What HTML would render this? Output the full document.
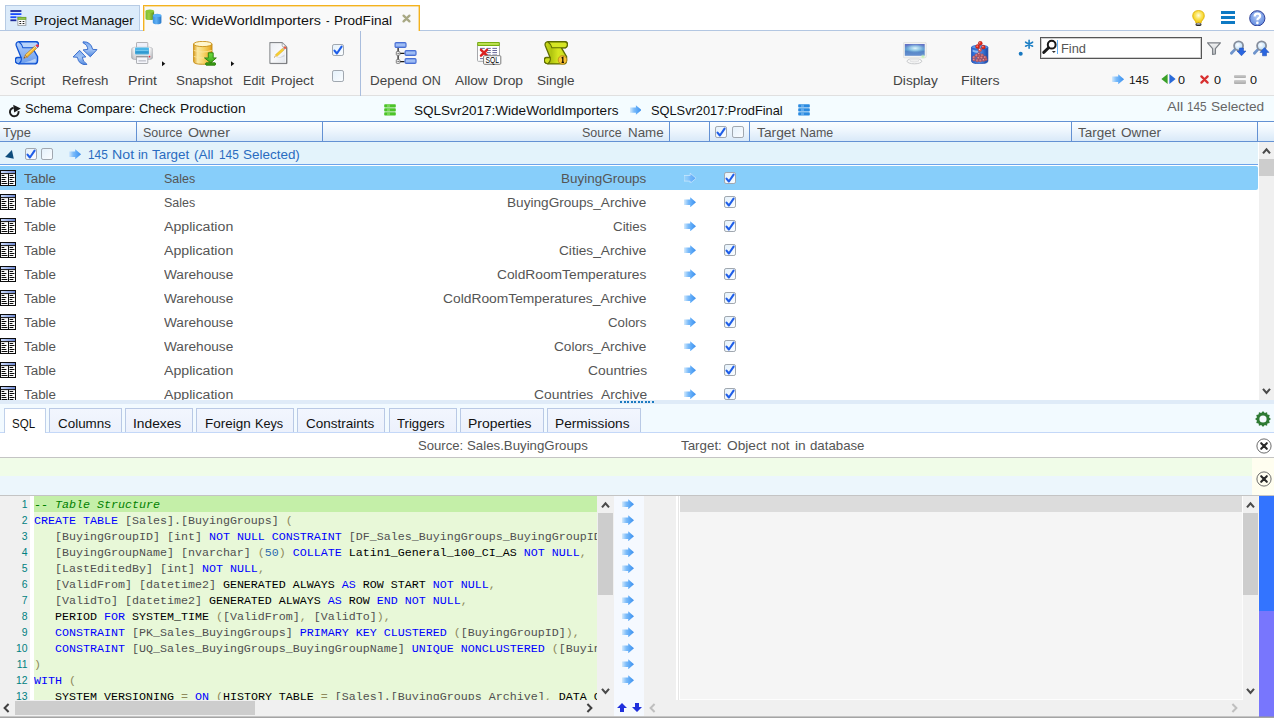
<!DOCTYPE html>
<html><head><meta charset="utf-8"><title>SC</title>
<style>
*{box-sizing:border-box;margin:0;padding:0}
html,body{width:1274px;height:718px;overflow:hidden;background:#fff;font-family:"Liberation Sans",sans-serif;font-size:13.3px;color:#444}
#root{position:relative;width:1274px;height:718px;overflow:hidden;background:#fff}
.abs{position:absolute}
.t{position:absolute;white-space:nowrap;height:16px;line-height:16px;display:block}
.code{position:absolute;left:34px;white-space:pre;font-family:"Liberation Mono",monospace;font-size:11.67px;height:16px;line-height:16px;color:#000;width:563px;overflow:hidden}
.k{color:#0000ff}.i{color:#505050}.p{color:#8f8a5c}.n{color:#2a6ab0}.c{color:#008000;font-style:italic}
.ln{position:absolute;left:0;width:27.6px;text-align:right;font-size:10.4px;color:#008080;height:16px;line-height:16px}

</style></head><body><div id="root">
<svg width="0" height="0" style="position:absolute"><defs><linearGradient id="cbg" x1="0" y1="0" x2="1" y2="1"><stop offset="0" stop-color="#e4f1fb"/><stop offset="1" stop-color="#fbfdff"/></linearGradient><linearGradient id="arg" x1="0" y1="0" x2="1" y2="0"><stop offset="0" stop-color="#d4eafc"/><stop offset="0.35" stop-color="#7cbcfa"/><stop offset="0.7" stop-color="#55a4f6"/><stop offset="1" stop-color="#3f8eea"/></linearGradient><linearGradient id="argS" x1="0" y1="0" x2="1" y2="0"><stop offset="0" stop-color="#a8d8fc" stop-opacity="0.3"/><stop offset="0.5" stop-color="#74b8fa"/><stop offset="1" stop-color="#5aa6f6"/></linearGradient><linearGradient id="thg" x1="0" y1="0" x2="1" y2="0"><stop offset="0" stop-color="#ccdcfc"/><stop offset="1" stop-color="#6c86d0"/></linearGradient></defs></svg>
<div class="abs" style="left:5px;top:5px;width:135px;height:26px;background:#dcebfa;border:1px solid #b7cbe4;border-bottom:none"></div>
<div class="abs" style="left:143px;top:5px;width:276.5px;height:26px;background:#f9f9f9;border:1px solid #f4b21e;border-bottom:none;z-index:3;box-shadow:inset 1px 1px 0 rgba(245,180,28,.4),inset -1px 0 0 rgba(245,180,28,.4)"></div>
<div class="abs" style="left:0px;top:30px;width:1274px;height:1px;background:#b3c7e2"></div>
<div class="abs" style="left:145px;top:30px;width:273px;height:1px;background:#f9f9f9;z-index:4"></div>
<span class="t" style="left:33.60px;top:12.66px;font-size:13.4px;color:#111;transform:scaleX(1.0630);transform-origin:0 0;">Project</span>
<span class="t" style="left:81.00px;top:12.66px;font-size:13.4px;color:#111;transform:scaleX(0.9969);transform-origin:0 0;">Manager</span>
<span class="t" style="left:168.90px;top:12.66px;font-size:13.4px;color:#111;transform:scaleX(0.8157);transform-origin:0 0;z-index:5;">SC:</span>
<span class="t" style="left:191.30px;top:12.66px;font-size:13.4px;color:#111;transform:scaleX(1.0667);transform-origin:0 0;z-index:5;">WideWorldImporters</span>
<span class="t" style="left:326.00px;top:12.66px;font-size:13.4px;color:#111;transform:scaleX(0.8020);transform-origin:0 0;z-index:5;">-</span>
<span class="t" style="left:333.50px;top:12.66px;font-size:13.4px;color:#111;transform:scaleX(1.0113);transform-origin:0 0;z-index:5;">ProdFinal</span>
<div class="abs" style="left:0px;top:31px;width:1274px;height:65px;background:#f8f8f8"></div>
<div class="abs" style="left:0px;top:95px;width:1274px;height:1px;background:#e0e0e0"></div>
<div class="abs" style="left:360px;top:31px;width:1px;height:65px;background:#a9bddd"></div>
<span class="t" style="left:10.00px;top:72.86px;font-size:13.4px;color:#444;transform:scaleX(1.0223);transform-origin:0 0;">Script</span>
<span class="t" style="left:61.80px;top:72.86px;font-size:13.4px;color:#444;transform:scaleX(0.9893);transform-origin:0 0;">Refresh</span>
<span class="t" style="left:127.50px;top:72.86px;font-size:13.4px;color:#444;transform:scaleX(1.0531);transform-origin:0 0;">Print</span>
<span class="t" style="left:175.80px;top:72.86px;font-size:13.4px;color:#444;transform:scaleX(0.9980);transform-origin:0 0;">Snapshot</span>
<span class="t" style="left:243.10px;top:72.86px;font-size:13.4px;color:#444;transform:scaleX(0.9388);transform-origin:0 0;">Edit</span>
<span class="t" style="left:270.70px;top:72.86px;font-size:13.4px;color:#444;transform:scaleX(1.0270);transform-origin:0 0;">Project</span>
<span class="t" style="left:369.50px;top:72.86px;font-size:13.4px;color:#444;transform:scaleX(1.0050);transform-origin:0 0;">Depend</span>
<span class="t" style="left:421.80px;top:72.86px;font-size:13.4px;color:#444;transform:scaleX(0.9353);transform-origin:0 0;">ON</span>
<span class="t" style="left:455.00px;top:72.86px;font-size:13.4px;color:#444;transform:scaleX(1.0220);transform-origin:0 0;">Allow</span>
<span class="t" style="left:493.40px;top:72.86px;font-size:13.4px;color:#444;transform:scaleX(1.0351);transform-origin:0 0;">Drop</span>
<span class="t" style="left:537.00px;top:72.86px;font-size:13.4px;color:#444;transform:scaleX(1.0067);transform-origin:0 0;">Single</span>
<span class="t" style="left:893.00px;top:72.86px;font-size:13.4px;color:#444;transform:scaleX(1.0193);transform-origin:0 0;">Display</span>
<span class="t" style="left:961.30px;top:72.86px;font-size:13.4px;color:#444;transform:scaleX(1.0618);transform-origin:0 0;">Filters</span>
<svg class="abs" style="left:332px;top:44px" width="12" height="12" viewBox="0 0 12 12"><rect x="0.5" y="0.5" width="11" height="11" rx="1.6" fill="url(#cbg)" stroke="#a0a7af"/><path d="M2.5 6.6 L4.9 9.5 L9.6 2.7" fill="none" stroke="#1f5ee8" stroke-width="2.1" stroke-linecap="round" stroke-linejoin="round"/></svg>
<svg class="abs" style="left:332px;top:70px" width="12" height="12" viewBox="0 0 12 12"><rect x="0.5" y="0.5" width="11" height="11" rx="1.6" fill="url(#cbg)" stroke="#a0a7af"/></svg>
<svg class="abs" style="left:162px;top:60.8px" width="4" height="6" viewBox="0 0 4 6"><path d="M0 0.2 L3.3 2.7 L0 5.2Z" fill="#111"/></svg>
<svg class="abs" style="left:231px;top:60.8px" width="4" height="6" viewBox="0 0 4 6"><path d="M0 0.2 L3.3 2.7 L0 5.2Z" fill="#111"/></svg>
<div class="abs" style="left:1040px;top:37px;width:162px;height:22px;background:#fff;border:1px solid #555;box-shadow:inset 0 0 0 1px #cfcfcf"></div>
<span class="t" style="left:1061.00px;top:41.40px;font-size:13px;color:#555;transform:scaleX(0.9887);transform-origin:0 0;">Find</span>
<svg class="abs" style="left:1112.4px;top:73.8px" width="12.3" height="10.5" viewBox="0 0 12.3 10.5"><path d="M0 2.5 H6.2 V0.2 L12.1 5.25 L6.2 10.3 V8.1 H0 Z" fill="url(#arg)"/></svg>
<span class="t" style="left:1128.60px;top:72.28px;font-size:11.3px;color:#111;transform:scaleX(1.0492);transform-origin:0 0;">145</span>
<span class="t" style="left:1178.00px;top:72.28px;font-size:11.3px;color:#111;transform:scaleX(1.1162);transform-origin:0 0;">0</span>
<span class="t" style="left:1214.00px;top:72.28px;font-size:11.3px;color:#111;transform:scaleX(1.1162);transform-origin:0 0;">0</span>
<span class="t" style="left:1250.00px;top:72.28px;font-size:11.3px;color:#111;transform:scaleX(1.1162);transform-origin:0 0;">0</span>
<div class="abs" style="left:0px;top:96px;width:1274px;height:25px;background:#f4fcff"></div>
<span class="t" style="left:25.30px;top:101.29px;font-size:13.3px;color:#111;transform:scaleX(0.9588);transform-origin:0 0;">Schema</span>
<span class="t" style="left:76.80px;top:101.29px;font-size:13.3px;color:#111;transform:scaleX(1.0019);transform-origin:0 0;">Compare:</span>
<span class="t" style="left:139.30px;top:101.29px;font-size:13.3px;color:#111;transform:scaleX(0.9663);transform-origin:0 0;">Check</span>
<span class="t" style="left:180.00px;top:101.29px;font-size:13.3px;color:#111;transform:scaleX(1.0303);transform-origin:0 0;">Production</span>
<span class="t" style="left:414.00px;top:102.79px;font-size:13.3px;color:#111;transform:scaleX(1.0183);transform-origin:0 0;">SQLSvr2017:WideWorldImporters</span>
<span class="t" style="left:651.30px;top:102.79px;font-size:13.3px;color:#111;transform:scaleX(0.9628);transform-origin:0 0;">SQLSvr2017:ProdFinal</span>
<svg class="abs" style="left:629.5px;top:104.6px" width="11.7" height="10" viewBox="0 0 12.3 10.5"><path d="M0 2.5 H6.2 V0.2 L12.1 5.25 L6.2 10.3 V8.1 H0 Z" fill="url(#arg)"/></svg>
<span class="t" style="left:1167.20px;top:99.06px;font-size:12.8px;color:#666;transform:scaleX(1.1402);transform-origin:0 0;">All</span>
<span class="t" style="left:1187.30px;top:99.06px;font-size:12.8px;color:#666;transform:scaleX(0.9216);transform-origin:0 0;">145</span>
<span class="t" style="left:1211.20px;top:99.06px;font-size:12.8px;color:#666;transform:scaleX(1.0664);transform-origin:0 0;">Selected</span>
<div class="abs" style="left:0px;top:121px;width:1258px;height:21px;border-top:1px solid #6391d3;border-bottom:1px solid #6391d3;background:linear-gradient(#fcfeff 0%,#eef6fd 45%,#d9e9f8 100%)"></div>
<div class="abs" style="left:136px;top:122px;width:1px;height:19px;background:#6391d3"></div>
<div class="abs" style="left:322px;top:122px;width:1px;height:19px;background:#6391d3"></div>
<div class="abs" style="left:669px;top:122px;width:1px;height:19px;background:#6391d3"></div>
<div class="abs" style="left:709px;top:122px;width:1px;height:19px;background:#6391d3"></div>
<div class="abs" style="left:749px;top:122px;width:1px;height:19px;background:#6391d3"></div>
<div class="abs" style="left:1071px;top:122px;width:1px;height:19px;background:#6391d3"></div>
<div class="abs" style="left:1257px;top:122px;width:1px;height:19px;background:#6391d3"></div>
<span class="t" style="left:3.00px;top:125.09px;font-size:13.3px;color:#555;transform:scaleX(0.9702);transform-origin:0 0;">Type</span>
<span class="t" style="left:142.80px;top:125.09px;font-size:13.3px;color:#555;transform:scaleX(0.9369);transform-origin:0 0;">Source</span>
<span class="t" style="left:187.90px;top:125.09px;font-size:13.3px;color:#555;transform:scaleX(1.0697);transform-origin:0 0;">Owner</span>
<span class="t" style="left:582.30px;top:125.09px;font-size:13.3px;color:#555;transform:scaleX(0.9393);transform-origin:0 0;">Source</span>
<span class="t" style="left:627.60px;top:125.09px;font-size:13.3px;color:#555;transform:scaleX(1.0053);transform-origin:0 0;">Name</span>
<span class="t" style="left:756.80px;top:125.09px;font-size:13.3px;color:#555;transform:scaleX(1.0386);transform-origin:0 0;">Target</span>
<span class="t" style="left:800.10px;top:125.09px;font-size:13.3px;color:#555;transform:scaleX(0.9349);transform-origin:0 0;">Name</span>
<span class="t" style="left:1078.40px;top:125.09px;font-size:13.3px;color:#555;transform:scaleX(1.0115);transform-origin:0 0;">Target</span>
<span class="t" style="left:1120.60px;top:125.09px;font-size:13.3px;color:#555;transform:scaleX(1.0212);transform-origin:0 0;">Owner</span>
<svg class="abs" style="left:715px;top:126px" width="12" height="12" viewBox="0 0 12 12"><rect x="0.5" y="0.5" width="11" height="11" rx="1.6" fill="url(#cbg)" stroke="#a0a7af"/><path d="M2.5 6.6 L4.9 9.5 L9.6 2.7" fill="none" stroke="#1f5ee8" stroke-width="2.1" stroke-linecap="round" stroke-linejoin="round"/></svg>
<svg class="abs" style="left:732px;top:126px" width="12" height="12" viewBox="0 0 12 12"><rect x="0.5" y="0.5" width="11" height="11" rx="1.6" fill="url(#cbg)" stroke="#a0a7af"/></svg>
<div class="abs" style="left:0px;top:142px;width:1258px;height:22px;background:#e3f3fb"></div>
<div class="abs" style="left:0px;top:164px;width:1258px;height:1px;background:#6ea3ea"></div>
<svg class="abs" style="left:5px;top:149.8px" width="9" height="9" viewBox="0 0 9 9"><path d="M0.1 7.1 L6.9 0.1 L8.8 8.7 Z" fill="#0d4c7c"/></svg>
<svg class="abs" style="left:25px;top:148px" width="12" height="12" viewBox="0 0 12 12"><rect x="0.5" y="0.5" width="11" height="11" rx="1.6" fill="url(#cbg)" stroke="#a0a7af"/><path d="M2.5 6.6 L4.9 9.5 L9.6 2.7" fill="none" stroke="#1f5ee8" stroke-width="2.1" stroke-linecap="round" stroke-linejoin="round"/></svg>
<svg class="abs" style="left:41px;top:148px" width="12" height="12" viewBox="0 0 12 12"><rect x="0.5" y="0.5" width="11" height="11" rx="1.6" fill="url(#cbg)" stroke="#a0a7af"/></svg>
<svg class="abs" style="left:69.3px;top:148.8px" width="12.3" height="10.5" viewBox="0 0 12.3 10.5"><path d="M0 2.5 H6.2 V0.2 L12.1 5.25 L6.2 10.3 V8.1 H0 Z" fill="url(#arg)"/></svg>
<span class="t" style="left:87.60px;top:147.16px;font-size:13.4px;color:#2a6cc0;transform:scaleX(0.8848);transform-origin:0 0;">145</span>
<span class="t" style="left:112.10px;top:147.16px;font-size:13.4px;color:#2a6cc0;transform:scaleX(1.0606);transform-origin:0 0;">Not</span>
<span class="t" style="left:138.10px;top:147.16px;font-size:13.4px;color:#2a6cc0;transform:scaleX(0.9663);transform-origin:0 0;">in</span>
<span class="t" style="left:151.90px;top:147.16px;font-size:13.4px;color:#2a6cc0;transform:scaleX(1.0013);transform-origin:0 0;">Target</span>
<span class="t" style="left:194.10px;top:147.16px;font-size:13.4px;color:#2a6cc0;transform:scaleX(1.0071);transform-origin:0 0;">(All</span>
<span class="t" style="left:218.70px;top:147.16px;font-size:13.4px;color:#2a6cc0;transform:scaleX(0.8848);transform-origin:0 0;">145</span>
<span class="t" style="left:243.00px;top:147.16px;font-size:13.4px;color:#2a6cc0;transform:scaleX(1.0050);transform-origin:0 0;">Selected)</span>
<div class="abs" style="left:0;top:166px;width:1258px;height:234px;overflow:hidden">
</div>
<div class="abs" style="left:0px;top:166px;width:1258px;height:24px;background:#87cefa;border-radius:0 2px 2px 0"></div>
<svg class="abs" style="left:0px;top:170px" width="16" height="16" viewBox="0 0 16 16"><rect x="0.5" y="0.5" width="15" height="15" fill="#fdfdfd" stroke="#0c0c0c"/><rect x="1" y="1" width="14" height="2.2" fill="url(#thg)"/><rect x="0" y="3.1" width="16" height="1" fill="#0c0c0c"/><rect x="8" y="3.5" width="1" height="12" fill="#0c0c0c"/><path d="M2 5.5h1.9M2 7.5h4M2 9.5h2.9M2 11.5h4M2 13.5h4.9M10 5.5h2.7M10 7.5h4M10 9.5h2M10 11.5h4M10 13.5h2.9" stroke="#0c0c0c" stroke-width="1.15" stroke-linecap="round"/></svg>
<span class="t" style="left:24.00px;top:170.95px;font-size:13.7px;color:#555;transform:scaleX(0.9773);transform-origin:0 0;">Table</span>
<span class="t" style="left:164.40px;top:170.95px;font-size:13.7px;color:#555;transform:scaleX(0.9109);transform-origin:0 0;">Sales</span>
<span class="t" style="left:561.40px;top:170.95px;font-size:13.7px;color:#555;transform:scaleX(0.9840);transform-origin:0 0;">BuyingGroups</span>
<svg class="abs" style="left:684px;top:172.5px" width="12.3" height="10.5" viewBox="0 0 12.3 10.5"><path d="M0 2.5 H6.2 V0.2 L12.1 5.25 L6.2 10.3 V8.1 H0 Z" fill="url(#argS)" stroke="#e4f2ff" stroke-width="0.7" stroke-opacity="0.8"/></svg>
<svg class="abs" style="left:724px;top:172px" width="12" height="12" viewBox="0 0 12 12"><rect x="0.5" y="0.5" width="11" height="11" rx="1.6" fill="url(#cbg)" stroke="#a0a7af"/><path d="M2.5 6.6 L4.9 9.5 L9.6 2.7" fill="none" stroke="#1f5ee8" stroke-width="2.1" stroke-linecap="round" stroke-linejoin="round"/></svg>
<svg class="abs" style="left:0px;top:194px" width="16" height="16" viewBox="0 0 16 16"><rect x="0.5" y="0.5" width="15" height="15" fill="#fdfdfd" stroke="#0c0c0c"/><rect x="1" y="1" width="14" height="2.2" fill="url(#thg)"/><rect x="0" y="3.1" width="16" height="1" fill="#0c0c0c"/><rect x="8" y="3.5" width="1" height="12" fill="#0c0c0c"/><path d="M2 5.5h1.9M2 7.5h4M2 9.5h2.9M2 11.5h4M2 13.5h4.9M10 5.5h2.7M10 7.5h4M10 9.5h2M10 11.5h4M10 13.5h2.9" stroke="#0c0c0c" stroke-width="1.15" stroke-linecap="round"/></svg>
<span class="t" style="left:24.00px;top:194.95px;font-size:13.7px;color:#555;transform:scaleX(0.9773);transform-origin:0 0;">Table</span>
<span class="t" style="left:164.40px;top:194.95px;font-size:13.7px;color:#555;transform:scaleX(0.9109);transform-origin:0 0;">Sales</span>
<span class="t" style="left:507.40px;top:194.95px;font-size:13.7px;color:#555;transform:scaleX(0.9946);transform-origin:0 0;">BuyingGroups_Archive</span>
<svg class="abs" style="left:684px;top:196.5px" width="12.3" height="10.5" viewBox="0 0 12.3 10.5"><path d="M0 2.5 H6.2 V0.2 L12.1 5.25 L6.2 10.3 V8.1 H0 Z" fill="url(#arg)"/></svg>
<svg class="abs" style="left:724px;top:196px" width="12" height="12" viewBox="0 0 12 12"><rect x="0.5" y="0.5" width="11" height="11" rx="1.6" fill="url(#cbg)" stroke="#a0a7af"/><path d="M2.5 6.6 L4.9 9.5 L9.6 2.7" fill="none" stroke="#1f5ee8" stroke-width="2.1" stroke-linecap="round" stroke-linejoin="round"/></svg>
<svg class="abs" style="left:0px;top:218px" width="16" height="16" viewBox="0 0 16 16"><rect x="0.5" y="0.5" width="15" height="15" fill="#fdfdfd" stroke="#0c0c0c"/><rect x="1" y="1" width="14" height="2.2" fill="url(#thg)"/><rect x="0" y="3.1" width="16" height="1" fill="#0c0c0c"/><rect x="8" y="3.5" width="1" height="12" fill="#0c0c0c"/><path d="M2 5.5h1.9M2 7.5h4M2 9.5h2.9M2 11.5h4M2 13.5h4.9M10 5.5h2.7M10 7.5h4M10 9.5h2M10 11.5h4M10 13.5h2.9" stroke="#0c0c0c" stroke-width="1.15" stroke-linecap="round"/></svg>
<span class="t" style="left:24.00px;top:218.95px;font-size:13.7px;color:#555;transform:scaleX(0.9773);transform-origin:0 0;">Table</span>
<span class="t" style="left:164.40px;top:218.95px;font-size:13.7px;color:#555;transform:scaleX(1.0344);transform-origin:0 0;">Application</span>
<span class="t" style="left:613.40px;top:218.95px;font-size:13.7px;color:#555;transform:scaleX(0.9752);transform-origin:0 0;">Cities</span>
<svg class="abs" style="left:684px;top:220.5px" width="12.3" height="10.5" viewBox="0 0 12.3 10.5"><path d="M0 2.5 H6.2 V0.2 L12.1 5.25 L6.2 10.3 V8.1 H0 Z" fill="url(#arg)"/></svg>
<svg class="abs" style="left:724px;top:220px" width="12" height="12" viewBox="0 0 12 12"><rect x="0.5" y="0.5" width="11" height="11" rx="1.6" fill="url(#cbg)" stroke="#a0a7af"/><path d="M2.5 6.6 L4.9 9.5 L9.6 2.7" fill="none" stroke="#1f5ee8" stroke-width="2.1" stroke-linecap="round" stroke-linejoin="round"/></svg>
<svg class="abs" style="left:0px;top:242px" width="16" height="16" viewBox="0 0 16 16"><rect x="0.5" y="0.5" width="15" height="15" fill="#fdfdfd" stroke="#0c0c0c"/><rect x="1" y="1" width="14" height="2.2" fill="url(#thg)"/><rect x="0" y="3.1" width="16" height="1" fill="#0c0c0c"/><rect x="8" y="3.5" width="1" height="12" fill="#0c0c0c"/><path d="M2 5.5h1.9M2 7.5h4M2 9.5h2.9M2 11.5h4M2 13.5h4.9M10 5.5h2.7M10 7.5h4M10 9.5h2M10 11.5h4M10 13.5h2.9" stroke="#0c0c0c" stroke-width="1.15" stroke-linecap="round"/></svg>
<span class="t" style="left:24.00px;top:242.95px;font-size:13.7px;color:#555;transform:scaleX(0.9773);transform-origin:0 0;">Table</span>
<span class="t" style="left:164.40px;top:242.95px;font-size:13.7px;color:#555;transform:scaleX(1.0344);transform-origin:0 0;">Application</span>
<span class="t" style="left:559.40px;top:242.95px;font-size:13.7px;color:#555;transform:scaleX(0.9984);transform-origin:0 0;">Cities_Archive</span>
<svg class="abs" style="left:684px;top:244.5px" width="12.3" height="10.5" viewBox="0 0 12.3 10.5"><path d="M0 2.5 H6.2 V0.2 L12.1 5.25 L6.2 10.3 V8.1 H0 Z" fill="url(#arg)"/></svg>
<svg class="abs" style="left:724px;top:244px" width="12" height="12" viewBox="0 0 12 12"><rect x="0.5" y="0.5" width="11" height="11" rx="1.6" fill="url(#cbg)" stroke="#a0a7af"/><path d="M2.5 6.6 L4.9 9.5 L9.6 2.7" fill="none" stroke="#1f5ee8" stroke-width="2.1" stroke-linecap="round" stroke-linejoin="round"/></svg>
<svg class="abs" style="left:0px;top:266px" width="16" height="16" viewBox="0 0 16 16"><rect x="0.5" y="0.5" width="15" height="15" fill="#fdfdfd" stroke="#0c0c0c"/><rect x="1" y="1" width="14" height="2.2" fill="url(#thg)"/><rect x="0" y="3.1" width="16" height="1" fill="#0c0c0c"/><rect x="8" y="3.5" width="1" height="12" fill="#0c0c0c"/><path d="M2 5.5h1.9M2 7.5h4M2 9.5h2.9M2 11.5h4M2 13.5h4.9M10 5.5h2.7M10 7.5h4M10 9.5h2M10 11.5h4M10 13.5h2.9" stroke="#0c0c0c" stroke-width="1.15" stroke-linecap="round"/></svg>
<span class="t" style="left:24.00px;top:266.95px;font-size:13.7px;color:#555;transform:scaleX(0.9773);transform-origin:0 0;">Table</span>
<span class="t" style="left:164.40px;top:266.95px;font-size:13.7px;color:#555;transform:scaleX(0.9967);transform-origin:0 0;">Warehouse</span>
<span class="t" style="left:497.30px;top:266.95px;font-size:13.7px;color:#555;transform:scaleX(1.0067);transform-origin:0 0;">ColdRoomTemperatures</span>
<svg class="abs" style="left:684px;top:268.5px" width="12.3" height="10.5" viewBox="0 0 12.3 10.5"><path d="M0 2.5 H6.2 V0.2 L12.1 5.25 L6.2 10.3 V8.1 H0 Z" fill="url(#arg)"/></svg>
<svg class="abs" style="left:724px;top:268px" width="12" height="12" viewBox="0 0 12 12"><rect x="0.5" y="0.5" width="11" height="11" rx="1.6" fill="url(#cbg)" stroke="#a0a7af"/><path d="M2.5 6.6 L4.9 9.5 L9.6 2.7" fill="none" stroke="#1f5ee8" stroke-width="2.1" stroke-linecap="round" stroke-linejoin="round"/></svg>
<svg class="abs" style="left:0px;top:290px" width="16" height="16" viewBox="0 0 16 16"><rect x="0.5" y="0.5" width="15" height="15" fill="#fdfdfd" stroke="#0c0c0c"/><rect x="1" y="1" width="14" height="2.2" fill="url(#thg)"/><rect x="0" y="3.1" width="16" height="1" fill="#0c0c0c"/><rect x="8" y="3.5" width="1" height="12" fill="#0c0c0c"/><path d="M2 5.5h1.9M2 7.5h4M2 9.5h2.9M2 11.5h4M2 13.5h4.9M10 5.5h2.7M10 7.5h4M10 9.5h2M10 11.5h4M10 13.5h2.9" stroke="#0c0c0c" stroke-width="1.15" stroke-linecap="round"/></svg>
<span class="t" style="left:24.00px;top:290.95px;font-size:13.7px;color:#555;transform:scaleX(0.9773);transform-origin:0 0;">Table</span>
<span class="t" style="left:164.40px;top:290.95px;font-size:13.7px;color:#555;transform:scaleX(0.9967);transform-origin:0 0;">Warehouse</span>
<span class="t" style="left:443.10px;top:290.95px;font-size:13.7px;color:#555;transform:scaleX(1.0094);transform-origin:0 0;">ColdRoomTemperatures_Archive</span>
<svg class="abs" style="left:684px;top:292.5px" width="12.3" height="10.5" viewBox="0 0 12.3 10.5"><path d="M0 2.5 H6.2 V0.2 L12.1 5.25 L6.2 10.3 V8.1 H0 Z" fill="url(#arg)"/></svg>
<svg class="abs" style="left:724px;top:292px" width="12" height="12" viewBox="0 0 12 12"><rect x="0.5" y="0.5" width="11" height="11" rx="1.6" fill="url(#cbg)" stroke="#a0a7af"/><path d="M2.5 6.6 L4.9 9.5 L9.6 2.7" fill="none" stroke="#1f5ee8" stroke-width="2.1" stroke-linecap="round" stroke-linejoin="round"/></svg>
<svg class="abs" style="left:0px;top:314px" width="16" height="16" viewBox="0 0 16 16"><rect x="0.5" y="0.5" width="15" height="15" fill="#fdfdfd" stroke="#0c0c0c"/><rect x="1" y="1" width="14" height="2.2" fill="url(#thg)"/><rect x="0" y="3.1" width="16" height="1" fill="#0c0c0c"/><rect x="8" y="3.5" width="1" height="12" fill="#0c0c0c"/><path d="M2 5.5h1.9M2 7.5h4M2 9.5h2.9M2 11.5h4M2 13.5h4.9M10 5.5h2.7M10 7.5h4M10 9.5h2M10 11.5h4M10 13.5h2.9" stroke="#0c0c0c" stroke-width="1.15" stroke-linecap="round"/></svg>
<span class="t" style="left:24.00px;top:314.95px;font-size:13.7px;color:#555;transform:scaleX(0.9773);transform-origin:0 0;">Table</span>
<span class="t" style="left:164.40px;top:314.95px;font-size:13.7px;color:#555;transform:scaleX(0.9967);transform-origin:0 0;">Warehouse</span>
<span class="t" style="left:608.40px;top:314.95px;font-size:13.7px;color:#555;transform:scaleX(0.9699);transform-origin:0 0;">Colors</span>
<svg class="abs" style="left:684px;top:316.5px" width="12.3" height="10.5" viewBox="0 0 12.3 10.5"><path d="M0 2.5 H6.2 V0.2 L12.1 5.25 L6.2 10.3 V8.1 H0 Z" fill="url(#arg)"/></svg>
<svg class="abs" style="left:724px;top:316px" width="12" height="12" viewBox="0 0 12 12"><rect x="0.5" y="0.5" width="11" height="11" rx="1.6" fill="url(#cbg)" stroke="#a0a7af"/><path d="M2.5 6.6 L4.9 9.5 L9.6 2.7" fill="none" stroke="#1f5ee8" stroke-width="2.1" stroke-linecap="round" stroke-linejoin="round"/></svg>
<svg class="abs" style="left:0px;top:338px" width="16" height="16" viewBox="0 0 16 16"><rect x="0.5" y="0.5" width="15" height="15" fill="#fdfdfd" stroke="#0c0c0c"/><rect x="1" y="1" width="14" height="2.2" fill="url(#thg)"/><rect x="0" y="3.1" width="16" height="1" fill="#0c0c0c"/><rect x="8" y="3.5" width="1" height="12" fill="#0c0c0c"/><path d="M2 5.5h1.9M2 7.5h4M2 9.5h2.9M2 11.5h4M2 13.5h4.9M10 5.5h2.7M10 7.5h4M10 9.5h2M10 11.5h4M10 13.5h2.9" stroke="#0c0c0c" stroke-width="1.15" stroke-linecap="round"/></svg>
<span class="t" style="left:24.00px;top:338.95px;font-size:13.7px;color:#555;transform:scaleX(0.9773);transform-origin:0 0;">Table</span>
<span class="t" style="left:164.40px;top:338.95px;font-size:13.7px;color:#555;transform:scaleX(0.9967);transform-origin:0 0;">Warehouse</span>
<span class="t" style="left:554.40px;top:338.95px;font-size:13.7px;color:#555;transform:scaleX(0.9948);transform-origin:0 0;">Colors_Archive</span>
<svg class="abs" style="left:684px;top:340.5px" width="12.3" height="10.5" viewBox="0 0 12.3 10.5"><path d="M0 2.5 H6.2 V0.2 L12.1 5.25 L6.2 10.3 V8.1 H0 Z" fill="url(#arg)"/></svg>
<svg class="abs" style="left:724px;top:340px" width="12" height="12" viewBox="0 0 12 12"><rect x="0.5" y="0.5" width="11" height="11" rx="1.6" fill="url(#cbg)" stroke="#a0a7af"/><path d="M2.5 6.6 L4.9 9.5 L9.6 2.7" fill="none" stroke="#1f5ee8" stroke-width="2.1" stroke-linecap="round" stroke-linejoin="round"/></svg>
<svg class="abs" style="left:0px;top:362px" width="16" height="16" viewBox="0 0 16 16"><rect x="0.5" y="0.5" width="15" height="15" fill="#fdfdfd" stroke="#0c0c0c"/><rect x="1" y="1" width="14" height="2.2" fill="url(#thg)"/><rect x="0" y="3.1" width="16" height="1" fill="#0c0c0c"/><rect x="8" y="3.5" width="1" height="12" fill="#0c0c0c"/><path d="M2 5.5h1.9M2 7.5h4M2 9.5h2.9M2 11.5h4M2 13.5h4.9M10 5.5h2.7M10 7.5h4M10 9.5h2M10 11.5h4M10 13.5h2.9" stroke="#0c0c0c" stroke-width="1.15" stroke-linecap="round"/></svg>
<span class="t" style="left:24.00px;top:362.95px;font-size:13.7px;color:#555;transform:scaleX(0.9773);transform-origin:0 0;">Table</span>
<span class="t" style="left:164.40px;top:362.95px;font-size:13.7px;color:#555;transform:scaleX(1.0344);transform-origin:0 0;">Application</span>
<span class="t" style="left:587.50px;top:362.95px;font-size:13.7px;color:#555;transform:scaleX(1.0113);transform-origin:0 0;">Countries</span>
<svg class="abs" style="left:684px;top:364.5px" width="12.3" height="10.5" viewBox="0 0 12.3 10.5"><path d="M0 2.5 H6.2 V0.2 L12.1 5.25 L6.2 10.3 V8.1 H0 Z" fill="url(#arg)"/></svg>
<svg class="abs" style="left:724px;top:364px" width="12" height="12" viewBox="0 0 12 12"><rect x="0.5" y="0.5" width="11" height="11" rx="1.6" fill="url(#cbg)" stroke="#a0a7af"/><path d="M2.5 6.6 L4.9 9.5 L9.6 2.7" fill="none" stroke="#1f5ee8" stroke-width="2.1" stroke-linecap="round" stroke-linejoin="round"/></svg>
<svg class="abs" style="left:0px;top:386px" width="16" height="16" viewBox="0 0 16 16"><rect x="0.5" y="0.5" width="15" height="15" fill="#fdfdfd" stroke="#0c0c0c"/><rect x="1" y="1" width="14" height="2.2" fill="url(#thg)"/><rect x="0" y="3.1" width="16" height="1" fill="#0c0c0c"/><rect x="8" y="3.5" width="1" height="12" fill="#0c0c0c"/><path d="M2 5.5h1.9M2 7.5h4M2 9.5h2.9M2 11.5h4M2 13.5h4.9M10 5.5h2.7M10 7.5h4M10 9.5h2M10 11.5h4M10 13.5h2.9" stroke="#0c0c0c" stroke-width="1.15" stroke-linecap="round"/></svg>
<span class="t" style="left:24.00px;top:386.95px;font-size:13.7px;color:#555;transform:scaleX(0.9773);transform-origin:0 0;">Table</span>
<span class="t" style="left:164.40px;top:386.95px;font-size:13.7px;color:#555;transform:scaleX(1.0344);transform-origin:0 0;">Application</span>
<span class="t" style="left:533.50px;top:386.95px;font-size:13.7px;color:#555;transform:scaleX(1.0122);transform-origin:0 0;">Countries_Archive</span>
<svg class="abs" style="left:684px;top:388.5px" width="12.3" height="10.5" viewBox="0 0 12.3 10.5"><path d="M0 2.5 H6.2 V0.2 L12.1 5.25 L6.2 10.3 V8.1 H0 Z" fill="url(#arg)"/></svg>
<svg class="abs" style="left:724px;top:388px" width="12" height="12" viewBox="0 0 12 12"><rect x="0.5" y="0.5" width="11" height="11" rx="1.6" fill="url(#cbg)" stroke="#a0a7af"/><path d="M2.5 6.6 L4.9 9.5 L9.6 2.7" fill="none" stroke="#1f5ee8" stroke-width="2.1" stroke-linecap="round" stroke-linejoin="round"/></svg>
<div class="abs" style="left:0px;top:400px;width:1274px;height:4px;background:#dfebf8;z-index:6"></div>
<div class="abs" style="left:1259px;top:142px;width:15px;height:258px;background:#f0f0f0"></div>
<div class="abs" style="left:1259px;top:159px;width:15px;height:17px;background:#cdcdcd"></div>
<svg class="abs" style="left:1262.2px;top:146.7px" width="9" height="8" viewBox="0 0 9 8"><path d="M1 6.4 L4.5 2.4 L8 6.4" fill="none" stroke="#4a4a4a" stroke-width="2.1"/></svg>
<svg class="abs" style="left:1262.2px;top:388.4px" width="9" height="8" viewBox="0 0 9 8"><path d="M1 0.9 L4.5 4.9 L8 0.9" fill="none" stroke="#4a4a4a" stroke-width="2.1"/></svg>
<div class="abs" style="left:1258px;top:121px;width:16px;height:21px;border-top:1px solid #6391d3;border-bottom:1px solid #6391d3;background:linear-gradient(#fcfeff 0%,#eef6fd 45%,#d9e9f8 100%)"></div>
<div class="abs" style="left:0px;top:404px;width:1274px;height:29px;background:#f2faff;z-index:6"></div>
<div class="abs" style="left:0px;top:432px;width:1274px;height:1px;background:#c4d8f8;z-index:6"></div>
<div class="abs" style="left:4px;top:408px;width:42px;height:25px;background:#fff;border:1px solid #bfd0ea;border-bottom:none;z-index:7"></div>
<span class="t" style="left:12.00px;top:415.96px;font-size:13.4px;color:#111;transform:scaleX(0.8657);transform-origin:0 0;z-index:8;">SQL</span>
<div class="abs" style="left:49px;top:408px;width:73px;height:24px;background:linear-gradient(#f2f6fe,#ecf1fc);border:1px solid #b9c9e5;border-bottom:none;z-index:7"></div>
<span class="t" style="left:57.70px;top:415.96px;font-size:13.4px;color:#111;transform:scaleX(1.0026);transform-origin:0 0;z-index:8;">Columns</span>
<div class="abs" style="left:125px;top:408px;width:68px;height:24px;background:linear-gradient(#f2f6fe,#ecf1fc);border:1px solid #b9c9e5;border-bottom:none;z-index:7"></div>
<span class="t" style="left:133.40px;top:415.96px;font-size:13.4px;color:#111;transform:scaleX(1.0284);transform-origin:0 0;z-index:8;">Indexes</span>
<div class="abs" style="left:196px;top:408px;width:98px;height:24px;background:linear-gradient(#f2f6fe,#ecf1fc);border:1px solid #b9c9e5;border-bottom:none;z-index:7"></div>
<span class="t" style="left:204.70px;top:415.96px;font-size:13.4px;color:#111;transform:scaleX(1.0060);transform-origin:0 0;z-index:8;">Foreign</span>
<span class="t" style="left:254.60px;top:415.96px;font-size:13.4px;color:#111;transform:scaleX(0.9458);transform-origin:0 0;z-index:8;">Keys</span>
<div class="abs" style="left:297px;top:408px;width:88px;height:24px;background:linear-gradient(#f2f6fe,#ecf1fc);border:1px solid #b9c9e5;border-bottom:none;z-index:7"></div>
<span class="t" style="left:305.50px;top:415.96px;font-size:13.4px;color:#111;transform:scaleX(1.0088);transform-origin:0 0;z-index:8;">Constraints</span>
<div class="abs" style="left:389px;top:408px;width:68px;height:24px;background:linear-gradient(#f2f6fe,#ecf1fc);border:1px solid #b9c9e5;border-bottom:none;z-index:7"></div>
<span class="t" style="left:397.10px;top:415.96px;font-size:13.4px;color:#111;transform:scaleX(0.9806);transform-origin:0 0;z-index:8;">Triggers</span>
<div class="abs" style="left:460px;top:408px;width:84px;height:24px;background:linear-gradient(#f2f6fe,#ecf1fc);border:1px solid #b9c9e5;border-bottom:none;z-index:7"></div>
<span class="t" style="left:468.40px;top:415.96px;font-size:13.4px;color:#111;transform:scaleX(1.0408);transform-origin:0 0;z-index:8;">Properties</span>
<div class="abs" style="left:547px;top:408px;width:94px;height:24px;background:linear-gradient(#f2f6fe,#ecf1fc);border:1px solid #b9c9e5;border-bottom:none;z-index:7"></div>
<span class="t" style="left:555.40px;top:415.96px;font-size:13.4px;color:#111;transform:scaleX(1.0224);transform-origin:0 0;z-index:8;">Permissions</span>
<div class="abs" style="left:0px;top:433px;width:1274px;height:24px;background:#fff"></div>
<span class="t" style="left:418.20px;top:438.09px;font-size:13.3px;color:#555;transform:scaleX(0.9865);transform-origin:0 0;">Source:</span>
<span class="t" style="left:467.40px;top:438.09px;font-size:13.3px;color:#555;transform:scaleX(0.9965);transform-origin:0 0;">Sales.BuyingGroups</span>
<span class="t" style="left:681.30px;top:438.09px;font-size:13.3px;color:#555;transform:scaleX(1.0041);transform-origin:0 0;">Target:</span>
<span class="t" style="left:726.50px;top:438.09px;font-size:13.3px;color:#555;transform:scaleX(1.0303);transform-origin:0 0;">Object</span>
<span class="t" style="left:771.10px;top:438.09px;font-size:13.3px;color:#555;transform:scaleX(1.0007);transform-origin:0 0;">not</span>
<span class="t" style="left:794.60px;top:438.09px;font-size:13.3px;color:#555;transform:scaleX(1.0314);transform-origin:0 0;">in</span>
<span class="t" style="left:809.70px;top:438.09px;font-size:13.3px;color:#555;transform:scaleX(0.9958);transform-origin:0 0;">database</span>
<div class="abs" style="left:0px;top:457px;width:1274px;height:1px;background:#c4c4c4"></div>
<div class="abs" style="left:0px;top:458px;width:1252px;height:18px;background:#f0fce8"></div>
<div class="abs" style="left:0px;top:476px;width:1252px;height:19px;background:#ecf6fc"></div>
<div class="abs" style="left:1252px;top:458px;width:22px;height:37px;background:#fffef0"></div>
<div class="abs" style="left:0px;top:495px;width:1274px;height:1px;background:#c4c4c4"></div>
<div class="abs" style="left:0px;top:496px;width:30px;height:204px;background:#f0f0f0"></div>
<div class="abs" style="left:30px;top:496px;width:4px;height:204px;background:#fff"></div>
<div class="abs" style="left:34px;top:496px;width:563px;height:204px;background:#e8f8d8"></div>
<div class="abs" style="left:34px;top:496px;width:563px;height:16px;background:#c4efa8"></div>
<div class="ln" style="top:496.5px">1</div>
<div class="code" style="top:497px"><span class="c">-- Table Structure</span></div>
<div class="ln" style="top:512.5px">2</div>
<div class="code" style="top:513px"><span class="k">CREATE TABLE</span> <span class="i">[Sales].[BuyingGroups]</span> <span class="p">(</span></div>
<div class="ln" style="top:528.5px">3</div>
<div class="code" style="top:529px">   <span class="i">[BuyingGroupID] [int]</span> <span class="k">NOT NULL CONSTRAINT</span> <span class="i">[DF_Sales_BuyingGroups_BuyingGroupID]</span> <span class="k">DEFAULT</span></div>
<div class="ln" style="top:544.5px">4</div>
<div class="code" style="top:545px">   <span class="i">[BuyingGroupName] [nvarchar]</span> <span class="p">(</span><span class="n">50</span><span class="p">)</span> <span class="k">COLLATE</span> Latin1_General_100_CI_AS <span class="k">NOT NULL</span><span class="p">,</span></div>
<div class="ln" style="top:560.5px">5</div>
<div class="code" style="top:561px">   <span class="i">[LastEditedBy] [int]</span> <span class="k">NOT NULL</span><span class="p">,</span></div>
<div class="ln" style="top:576.5px">6</div>
<div class="code" style="top:577px">   <span class="i">[ValidFrom] [datetime2]</span> GENERATED ALWAYS <span class="k">AS</span> ROW START <span class="k">NOT NULL</span><span class="p">,</span></div>
<div class="ln" style="top:592.5px">7</div>
<div class="code" style="top:593px">   <span class="i">[ValidTo] [datetime2]</span> GENERATED ALWAYS <span class="k">AS</span> ROW <span class="k">END NOT NULL</span><span class="p">,</span></div>
<div class="ln" style="top:608.5px">8</div>
<div class="code" style="top:609px">   PERIOD <span class="k">FOR</span> SYSTEM_TIME <span class="p">(</span><span class="i">[ValidFrom]</span><span class="p">,</span> <span class="i">[ValidTo]</span><span class="p">),</span></div>
<div class="ln" style="top:624.5px">9</div>
<div class="code" style="top:625px">   <span class="k">CONSTRAINT</span> <span class="i">[PK_Sales_BuyingGroups]</span> <span class="k">PRIMARY KEY CLUSTERED</span> <span class="p">(</span><span class="i">[BuyingGroupID]</span><span class="p">),</span></div>
<div class="ln" style="top:640.5px">10</div>
<div class="code" style="top:641px">   <span class="k">CONSTRAINT</span> <span class="i">[UQ_Sales_BuyingGroups_BuyingGroupName]</span> <span class="k">UNIQUE NONCLUSTERED</span> <span class="p">(</span><span class="i">[BuyingGroupName]</span><span class="p">)</span></div>
<div class="ln" style="top:656.5px">11</div>
<div class="code" style="top:657px"><span class="p">)</span></div>
<div class="ln" style="top:672.5px">12</div>
<div class="code" style="top:673px"><span class="k">WITH</span> <span class="p">(</span></div>
<div class="ln" style="top:688.5px">13</div>
<div class="code" style="top:689px">   SYSTEM_VERSIONING <span class="p">=</span> <span class="k">ON</span> <span class="p">(</span>HISTORY_TABLE <span class="p">=</span> <span class="i">[Sales].[BuyingGroups_Archive]</span><span class="p">,</span> DATA_CONSISTENCY_CHECK <span class="p">=</span> <span class="k">ON</span><span class="p">)</span></div>
<div class="abs" style="left:597px;top:496px;width:17px;height:204px;background:#f0f0f0"></div>
<div class="abs" style="left:598px;top:513px;width:15px;height:82px;background:#cdcdcd"></div>
<svg class="abs" style="left:601.2px;top:500.6px" width="9" height="8" viewBox="0 0 9 8"><path d="M1 6.4 L4.5 2.4 L8 6.4" fill="none" stroke="#4a4a4a" stroke-width="2.1"/></svg>
<svg class="abs" style="left:601.2px;top:687.6px" width="9" height="8" viewBox="0 0 9 8"><path d="M1 0.9 L4.5 4.9 L8 0.9" fill="none" stroke="#4a4a4a" stroke-width="2.1"/></svg>
<div class="abs" style="left:614px;top:496px;width:30px;height:204px;background:#f5f9ff"></div>
<div class="abs" style="left:644px;top:496px;width:32px;height:204px;background:#f0f0f0"></div>
<div class="abs" style="left:676px;top:496px;width:4px;height:204px;background:#fff"></div>
<div class="abs" style="left:678px;top:496px;width:1px;height:204px;background:#e6e6e6"></div>
<svg class="abs" style="left:622px;top:498.8px" width="12.3" height="10.5" viewBox="0 0 12.3 10.5"><path d="M0 2.5 H6.2 V0.2 L12.1 5.25 L6.2 10.3 V8.1 H0 Z" fill="url(#arg)"/></svg>
<svg class="abs" style="left:622px;top:514.8px" width="12.3" height="10.5" viewBox="0 0 12.3 10.5"><path d="M0 2.5 H6.2 V0.2 L12.1 5.25 L6.2 10.3 V8.1 H0 Z" fill="url(#arg)"/></svg>
<svg class="abs" style="left:622px;top:530.8px" width="12.3" height="10.5" viewBox="0 0 12.3 10.5"><path d="M0 2.5 H6.2 V0.2 L12.1 5.25 L6.2 10.3 V8.1 H0 Z" fill="url(#arg)"/></svg>
<svg class="abs" style="left:622px;top:546.8px" width="12.3" height="10.5" viewBox="0 0 12.3 10.5"><path d="M0 2.5 H6.2 V0.2 L12.1 5.25 L6.2 10.3 V8.1 H0 Z" fill="url(#arg)"/></svg>
<svg class="abs" style="left:622px;top:562.8px" width="12.3" height="10.5" viewBox="0 0 12.3 10.5"><path d="M0 2.5 H6.2 V0.2 L12.1 5.25 L6.2 10.3 V8.1 H0 Z" fill="url(#arg)"/></svg>
<svg class="abs" style="left:622px;top:578.8px" width="12.3" height="10.5" viewBox="0 0 12.3 10.5"><path d="M0 2.5 H6.2 V0.2 L12.1 5.25 L6.2 10.3 V8.1 H0 Z" fill="url(#arg)"/></svg>
<svg class="abs" style="left:622px;top:594.8px" width="12.3" height="10.5" viewBox="0 0 12.3 10.5"><path d="M0 2.5 H6.2 V0.2 L12.1 5.25 L6.2 10.3 V8.1 H0 Z" fill="url(#arg)"/></svg>
<svg class="abs" style="left:622px;top:610.8px" width="12.3" height="10.5" viewBox="0 0 12.3 10.5"><path d="M0 2.5 H6.2 V0.2 L12.1 5.25 L6.2 10.3 V8.1 H0 Z" fill="url(#arg)"/></svg>
<svg class="abs" style="left:622px;top:626.8px" width="12.3" height="10.5" viewBox="0 0 12.3 10.5"><path d="M0 2.5 H6.2 V0.2 L12.1 5.25 L6.2 10.3 V8.1 H0 Z" fill="url(#arg)"/></svg>
<svg class="abs" style="left:622px;top:642.8px" width="12.3" height="10.5" viewBox="0 0 12.3 10.5"><path d="M0 2.5 H6.2 V0.2 L12.1 5.25 L6.2 10.3 V8.1 H0 Z" fill="url(#arg)"/></svg>
<svg class="abs" style="left:622px;top:658.8px" width="12.3" height="10.5" viewBox="0 0 12.3 10.5"><path d="M0 2.5 H6.2 V0.2 L12.1 5.25 L6.2 10.3 V8.1 H0 Z" fill="url(#arg)"/></svg>
<svg class="abs" style="left:622px;top:674.8px" width="12.3" height="10.5" viewBox="0 0 12.3 10.5"><path d="M0 2.5 H6.2 V0.2 L12.1 5.25 L6.2 10.3 V8.1 H0 Z" fill="url(#arg)"/></svg>
<div class="abs" style="left:680px;top:496px;width:562px;height:204px;background:#f5f5f5"></div>
<div class="abs" style="left:680px;top:496px;width:562px;height:16px;background:#dcdcdc"></div>
<div class="abs" style="left:1242px;top:496px;width:1px;height:204px;background:#fcfcfc"></div>
<div class="abs" style="left:1243px;top:496px;width:16px;height:204px;background:#f0f0f0"></div>
<div class="abs" style="left:1243px;top:513px;width:15px;height:82px;background:#cdcdcd"></div>
<svg class="abs" style="left:1246.2px;top:500.6px" width="9" height="8" viewBox="0 0 9 8"><path d="M1 6.4 L4.5 2.4 L8 6.4" fill="none" stroke="#4a4a4a" stroke-width="2.1"/></svg>
<svg class="abs" style="left:1246.2px;top:687.6px" width="9" height="8" viewBox="0 0 9 8"><path d="M1 0.9 L4.5 4.9 L8 0.9" fill="none" stroke="#4a4a4a" stroke-width="2.1"/></svg>
<div class="abs" style="left:1258px;top:496px;width:1px;height:222px;background:#f8f5f0"></div>
<div class="abs" style="left:1259px;top:496px;width:15px;height:115px;background:#3374ff"></div>
<div class="abs" style="left:1259px;top:611px;width:15px;height:107px;background:#7876fd"></div>
<div class="abs" style="left:0px;top:700px;width:1259px;height:16px;background:#f0f0f0;z-index:9"></div>
<div class="abs" style="left:15px;top:701px;width:240px;height:14px;background:#cdcdcd;z-index:10"></div>
<div class="abs" style="left:614px;top:700px;width:30px;height:16px;background:#f5f9ff;z-index:10"></div>
<svg class="abs" style="z-index:11;left:3px;top:703px" width="7" height="10" viewBox="0 0 7 10"><path d="M5.6 1 L1.6 5 L5.6 9" fill="none" stroke="#404040" stroke-width="2"/></svg>
<svg class="abs" style="z-index:11;left:585.6px;top:703.2px" width="7" height="10" viewBox="0 0 7 10"><path d="M1.4 1 L5.4 5 L1.4 9" fill="none" stroke="#404040" stroke-width="2"/></svg>
<svg class="abs" style="z-index:11;left:648.6px;top:703.2px" width="7" height="10" viewBox="0 0 7 10"><path d="M5.6 1 L1.6 5 L5.6 9" fill="none" stroke="#bfbfbf" stroke-width="2"/></svg>
<svg class="abs" style="z-index:11;left:1230.6px;top:703.2px" width="7" height="10" viewBox="0 0 7 10"><path d="M1.4 1 L5.4 5 L1.4 9" fill="none" stroke="#bfbfbf" stroke-width="2"/></svg>
<div class="abs" style="left:0px;top:716px;width:1274px;height:1px;background:rgba(150,150,150,0.55);z-index:13"></div>
<div class="abs" style="left:0px;top:717px;width:1274px;height:1px;background:#a4a4a4;z-index:13"></div>
<div class="abs" style="left:680px;top:699px;width:563px;height:1px;background:#fdfdfd"></div>
<svg width="0" height="0" style="position:absolute"><defs><linearGradient id="gBlue" x1="0" y1="0" x2="0" y2="1"><stop offset="0" stop-color="#b4d0fa"/><stop offset="1" stop-color="#6a9cec"/></linearGradient><linearGradient id="gBlue2" x1="0" y1="0" x2="0" y2="1"><stop offset="0" stop-color="#7aa8ee"/><stop offset="0.5" stop-color="#a4c6f6"/><stop offset="1" stop-color="#4f86de"/></linearGradient><linearGradient id="gGold" x1="0" y1="0" x2="1" y2="0"><stop offset="0" stop-color="#dca024"/><stop offset="0.22" stop-color="#fbe9a4"/><stop offset="0.55" stop-color="#f6d468"/><stop offset="0.85" stop-color="#ecb434"/><stop offset="1" stop-color="#d4961c"/></linearGradient><linearGradient id="gArG" x1="0" y1="0" x2="0" y2="1"><stop offset="0" stop-color="#6ee040"/><stop offset="1" stop-color="#369812"/></linearGradient><linearGradient id="gYel" x1="0" y1="0" x2="1" y2="0"><stop offset="0" stop-color="#d2e21c"/><stop offset="0.3" stop-color="#b0c410"/><stop offset="0.6" stop-color="#d6e620"/><stop offset="1" stop-color="#c8da18"/></linearGradient><linearGradient id="gScr" x1="0" y1="0" x2="0" y2="1"><stop offset="0" stop-color="#d8f0ff"/><stop offset="0.5" stop-color="#5fa8e8"/><stop offset="1" stop-color="#3c78d0"/></linearGradient><linearGradient id="gGrn" x1="0" y1="0" x2="1" y2="0"><stop offset="0" stop-color="#7ab830"/><stop offset="0.4" stop-color="#9cd040"/><stop offset="1" stop-color="#5c9020"/></linearGradient><linearGradient id="gCyl" x1="0" y1="0" x2="1" y2="0"><stop offset="0" stop-color="#3a90e0"/><stop offset="0.4" stop-color="#60b0f4"/><stop offset="1" stop-color="#2878c8"/></linearGradient><radialGradient id="gHelp" cx="0.5" cy="0.4" r="0.65"><stop offset="0" stop-color="#b0c8f6"/><stop offset="1" stop-color="#5c86dc"/></radialGradient><radialGradient id="gBulb" cx="0.5" cy="0.4" r="0.6"><stop offset="0" stop-color="#fffde4"/><stop offset="0.45" stop-color="#fbe560"/><stop offset="1" stop-color="#f2c600"/></radialGradient><radialGradient id="gLens" cx="0.4" cy="0.4" r="0.7"><stop offset="0" stop-color="#ffffff"/><stop offset="1" stop-color="#a8d4f8"/></radialGradient><linearGradient id="gGray" x1="0" y1="0" x2="0" y2="1"><stop offset="0" stop-color="#f4f4f4"/><stop offset="1" stop-color="#c4c8cc"/></linearGradient><linearGradient id="gBkt" x1="0" y1="0" x2="1" y2="0"><stop offset="0" stop-color="#2060d0"/><stop offset="0.5" stop-color="#5090f0"/><stop offset="1" stop-color="#1848a8"/></linearGradient><linearGradient id="gPrn" x1="0" y1="0" x2="1" y2="0"><stop offset="0" stop-color="#b4b6ba"/><stop offset="0.12" stop-color="#f6f6f8"/><stop offset="0.85" stop-color="#ffffff"/><stop offset="1" stop-color="#b8babe"/></linearGradient><linearGradient id="gPage" x1="0" y1="0" x2="1" y2="1"><stop offset="0" stop-color="#eceff3"/><stop offset="0.5" stop-color="#f8f9fb"/><stop offset="1" stop-color="#e2e6ec"/></linearGradient><linearGradient id="gBx" x1="0" y1="0" x2="0" y2="1"><stop offset="0" stop-color="#86aaf0"/><stop offset="0.5" stop-color="#a6c2f6"/><stop offset="1" stop-color="#7ea2ec"/></linearGradient><linearGradient id="gScrn" x1="0" y1="0" x2="0" y2="1"><stop offset="0" stop-color="#646cc2"/><stop offset="0.5" stop-color="#5a9cd0"/><stop offset="0.62" stop-color="#5484c6"/><stop offset="1" stop-color="#6690d0"/></linearGradient><radialGradient id="gScrnR" cx="0.52" cy="0.36" r="0.55" gradientTransform="translate(0 0.1) scale(1 0.72)"><stop offset="0" stop-color="#e4f8fc" stop-opacity="1"/><stop offset="0.5" stop-color="#a8dcf0" stop-opacity="0.7"/><stop offset="1" stop-color="#70b8e0" stop-opacity="0"/></radialGradient><radialGradient id="gGlow"><stop offset="0" stop-color="#b4f4a0" stop-opacity="0.95"/><stop offset="0.5" stop-color="#c8f4b8" stop-opacity="0.55"/><stop offset="1" stop-color="#e0f8d8" stop-opacity="0"/></radialGradient><linearGradient id="gPrnV" x1="0" y1="0" x2="0" y2="1"><stop offset="0" stop-color="#ffffff" stop-opacity="0.3"/><stop offset="1" stop-color="#8c8e96" stop-opacity="0.45"/></linearGradient><linearGradient id="gPrnB" x1="0" y1="0" x2="0" y2="1"><stop offset="0" stop-color="#52c0f0"/><stop offset="0.7" stop-color="#2f98d0"/><stop offset="1" stop-color="#58b4e0"/></linearGradient></defs></svg>
<svg class="abs" style="left:15px;top:40.5px" width="24" height="24" viewBox="0 0 24 24"><path d="M4 0.7 H21 Q23.7 0.9 23.5 3.6 Q23.3 5.8 21.4 6.8 H17.4 L22.6 15.6 V19.6 Q22.4 22.9 19.4 22.9 H4 Q0.3 22.6 0.2 19.2 Q0.3 16.5 2.6 16.5 H6.1 L1.2 4.4 Q0.5 1 4 0.7 Z" fill="url(#gBlue)" stroke="#0f52d2" stroke-width="1.3" stroke-linejoin="round"/><path d="M4 0.9 Q6.6 2.4 7.9 6.8 H21.4 Q23.4 5.6 23.3 3.4 Q23.2 1 21 0.9Z" fill="#b8d4fb" stroke="#0f52d2" stroke-width="1.1" stroke-linejoin="round"/><path d="M6.1 16.5 Q7.2 20.4 4 22.7 Q0.6 22.4 0.4 19.2 Q0.5 16.6 2.6 16.6Z" fill="#8fb8f4" stroke="#0f52d2" stroke-width="1.1" stroke-linejoin="round"/><path d="M9 21.4 H20.6 Q21.6 19 20.4 17.4 Q15 20.6 9 21.4Z" fill="#d4e6fc" opacity="0.7"/><path d="M10.12 14.02 L19.49 5.3 L21.53 7.5 L12.16 16.22 Z" fill="#f7bb30" stroke="#a86c10" stroke-width="0.6"/><path d="M11 14.4 L20 6" stroke="#fde28c" stroke-width="0.9"/><path d="M19.49 5.3 L20.44 4.42 L22.48 6.62 L21.53 7.5 Z" fill="#dcdcdc"/><path d="M20.44 4.42 L21.5 3.4 Q22.3 2.9 23.1 3.6 L23.7 4.3 Q24.2 5 23.6 5.6 L22.48 6.62 Z" fill="#e6334a"/><path d="M8.8 17.3 L10.12 14.02 L12.16 16.22 Z" fill="#d9a878" stroke="#a86c10" stroke-width="0.4"/><path d="M8.8 17.3 L9.3 16.07 L10.06 16.89 Z" fill="#5a300c"/></svg>
<svg class="abs" style="left:73px;top:40.5px" width="24.5" height="24.5" viewBox="0 0 24.5 24.5"><path d="M10.1 0.8 Q17.8 0.4 19.7 8.4 L24 8.6 L17.3 15.8 L10.1 8.9 L14.8 8.4 Q14.6 4 10.1 1.9 Z" fill="url(#gBlue2)" stroke="#2c64ca" stroke-width="0.9" stroke-linejoin="round"/><path d="M6.6 9.3 L12.8 16 L9.3 16.2 Q9.6 20.8 13.8 23 L13.6 23.8 Q5.6 23.8 4.4 16.3 L0.1 16 Z" fill="url(#gBlue2)" stroke="#2c64ca" stroke-width="0.9" stroke-linejoin="round"/></svg>
<svg class="abs" style="left:131px;top:42px" width="22" height="22" viewBox="0 0 22 22"><rect x="5.5" y="0.5" width="11.3" height="6" rx="0.6" fill="#eef0fa" stroke="#aaaaae" stroke-width="0.9"/><rect x="0.4" y="5.3" width="21.4" height="12.2" rx="3" fill="url(#gPrn)" stroke="#b4b6ba" stroke-width="0.7"/><rect x="0.4" y="5.3" width="21.4" height="12.2" rx="3" fill="url(#gPrnV)"/><rect x="4.1" y="5.4" width="13.8" height="7.1" rx="0.8" fill="url(#gPrnB)"/><rect x="4.6" y="7.8" width="12.8" height="1.1" fill="#8ad4f6" opacity="0.8"/><rect x="5.2" y="14.3" width="11.9" height="1.4" fill="#707478"/><rect x="5.5" y="15" width="11.3" height="6.5" rx="0.6" fill="#f4f5fa" stroke="#a4a6aa" stroke-width="0.9"/><rect x="7.5" y="18" width="7.4" height="1.6" fill="#c8cad2"/><circle cx="18.5" cy="14.6" r="0.85" fill="#e8283a"/></svg>
<svg class="abs" style="left:192.5px;top:40.5px" width="24" height="25" viewBox="0 0 24 25"><path d="M0.6 3 V20.6 Q0.6 23.3 9.8 23.3 Q19 23.3 19 20.6 V3 Z" fill="url(#gGold)" stroke="#c48c12" stroke-width="0.9"/><path d="M0.8 9.4 Q9.8 12.6 18.8 9.4 M0.8 15.4 Q9.8 18.6 18.8 15.4" fill="none" stroke="#fbe8a0" stroke-width="0.9" opacity="0.9"/><ellipse cx="9.8" cy="3" rx="9.2" ry="2.6" fill="#fff6cc" stroke="#c8921a" stroke-width="0.9"/><path d="M15.3 11.8 H20.2 V16.9 H23.3 L17.8 21.8 H22 Q22.6 21.9 22.6 23 Q22.6 24.1 22 24.2 H13.2 Q12.6 24.1 12.6 23 Q12.6 21.9 13.2 21.8 H17.6 L11.5 16.9 H15.3 Z" fill="url(#gArG)" stroke="#2a7c0a" stroke-width="0.9" stroke-linejoin="round"/></svg>
<svg class="abs" style="left:269px;top:42px" width="19" height="22.5" viewBox="0 0 19 22.5"><path d="M0.9 0.6 H13.2 L17.6 5 V21.3 H0.9 Z" fill="#fff" stroke="#85888c" stroke-width="1.1" stroke-linejoin="round"/><path d="M1.2 21.6 H17.9 V5.4" fill="none" stroke="#6c6e72" stroke-width="0.9" opacity="0.8"/><path d="M2 1.7 H12.4 L16.5 5.8 V20.2 H2 Z" fill="url(#gPage)"/><path d="M13.2 0.6 V3.6 Q13.3 5 14.8 5 H17.6 Z" fill="#fafafa" stroke="#8c8e92" stroke-width="0.7"/><path d="M7 15.9 Q12 15.6 15.6 12.4 L15.4 14.6 Q11 16.6 7 15.9Z" fill="#b8bcc4" opacity="0.55"/><path d="M6.3 12.87 L13.57 6.28 L15.11 7.98 L7.84 14.57 Z" fill="#f8d030" stroke="#d0a018" stroke-width="0.4"/><path d="M13.57 6.28 L14.31 5.61 L15.85 7.31 L15.11 7.98 Z" fill="#b4b6ba"/><path d="M14.31 5.61 L15.4 4.6 Q16.1 4.1 16.8 4.8 L17.3 5.4 Q17.6 6 17.1 6.4 L15.85 7.31 Z" fill="#f05a3c"/><path d="M5 15.6 L6.3 12.87 L7.84 14.57 Z" fill="#e8c890"/><path d="M5 15.6 L5.5 14.5 L6.1 15.2Z" fill="#8a6a30"/></svg>
<svg class="abs" style="left:393.5px;top:42px" width="23.5" height="22.5" viewBox="0 0 23.5 22.5"><path d="M4.1 5.6 V19.5 H10.6 M4.1 11.4 H10.6" fill="none" stroke="#1a1a1a" stroke-width="1.25"/><rect x="1.1" y="0.6" width="10.9" height="4.7" rx="1.1" fill="url(#gBx)" stroke="#4a70d4" stroke-width="1.2"/><rect x="11.1" y="8.6" width="10.9" height="4.7" rx="1.1" fill="url(#gBx)" stroke="#4a70d4" stroke-width="1.2"/><rect x="11.1" y="16.6" width="10.9" height="4.7" rx="1.1" fill="url(#gBx)" stroke="#4a70d4" stroke-width="1.2"/><rect x="2.3" y="9.6" width="3.6" height="3.6" rx="0.5" fill="#fff" stroke="#7c7c7c" stroke-width="1"/><rect x="2.3" y="17.7" width="3.6" height="3.6" rx="0.5" fill="#fff" stroke="#7c7c7c" stroke-width="1"/><rect x="3.6" y="10.9" width="1" height="1" fill="#222"/><rect x="3.6" y="19" width="1" height="1" fill="#222"/></svg>
<svg class="abs" style="left:477px;top:42px" width="24.5" height="23" viewBox="0 0 24.5 23"><rect x="0.5" y="0.5" width="22" height="18.8" rx="0.8" fill="#fefefe" stroke="#a6a8ac"/><rect x="0.2" y="0.1" width="22.6" height="3.8" rx="0.9" fill="#78b010"/><rect x="1.2" y="1.1" width="20.6" height="1.7" fill="#c6e65c"/><path d="M3 6.4h4.8M9.6 6.4h4.2M15.4 6.4h4.6M9.6 8.5h4.2M15.4 8.5h4.6M9.6 10.6h4.2M15.4 10.6h4.6M3 16.6h3" stroke="#56588e" stroke-width="0.9"/><path d="M9.6 12.6h4.2M15.4 12.6h4.6" stroke="#a4a6c4" stroke-width="0.9"/><path d="M4 7.9 L10 13.7 M10 7.9 L4 13.7" stroke="#da2020" stroke-width="2.5" stroke-linecap="round"/><rect x="6.6" y="13.7" width="17.2" height="8.6" rx="1" fill="#fff" stroke="#7a7a7a" stroke-width="1"/><text x="15.2" y="21.1" font-family="Liberation Sans, sans-serif" font-size="8.4" text-anchor="middle" fill="#000" textLength="13.4" lengthAdjust="spacingAndGlyphs">SQL</text></svg>
<svg class="abs" style="left:544px;top:40.5px" width="24" height="24" viewBox="0 0 24 24"><path d="M4 0.7 H21 Q23.7 0.9 23.5 3.6 Q23.3 5.8 21.4 6.8 H17.4 L22.6 15.6 V19.6 Q22.4 22.9 19.4 22.9 H4 Q0.3 22.6 0.2 19.2 Q0.3 16.5 2.6 16.5 H6.1 L1.2 4.4 Q0.5 1 4 0.7 Z" fill="url(#gYel)" stroke="#5f6d00" stroke-width="1.3" stroke-linejoin="round"/><path d="M4 0.9 Q6.6 2.4 7.9 6.8 H21.4 Q23.4 5.6 23.3 3.4 Q23.2 1 21 0.9Z" fill="#d6e624" stroke="#5f6d00" stroke-width="1.1" stroke-linejoin="round"/><path d="M6.1 16.5 Q7.2 20.4 4 22.7 Q0.6 22.4 0.4 19.2 Q0.5 16.6 2.6 16.6Z" fill="#d0e020" stroke="#5f6d00" stroke-width="1.1" stroke-linejoin="round"/><circle cx="18.5" cy="18.9" r="4.3" fill="#f9c233" stroke="#b4851a" stroke-width="0.8"/><path d="M17.6 17 L18.8 16.4 V21.2 M17.6 21.4 H20" fill="none" stroke="#1a1200" stroke-width="1.3"/></svg>
<svg class="abs" style="left:903.3px;top:42px" width="24" height="22.5" viewBox="0 0 24 22.5"><ellipse cx="11.4" cy="19.2" rx="7.4" ry="2.6" fill="#fafafa" stroke="#c8cacc" stroke-width="1"/><ellipse cx="11.4" cy="18.6" rx="4.6" ry="1.4" fill="#f0f0f0" stroke="#d4d6d8" stroke-width="0.7"/><path d="M7.6 15.6 H15.2 L16.2 18 H6.6Z" fill="#e6e7e8"/><rect x="0.3" y="0.4" width="23" height="15.4" rx="1.4" fill="#f3f3f2" stroke="#dededc" stroke-width="0.8"/><rect x="1.8" y="2" width="19.9" height="11.8" fill="url(#gScrn)"/><rect x="1.8" y="2" width="19.9" height="11.8" fill="url(#gScrnR)"/><circle cx="19.9" cy="14.6" r="2.6" fill="url(#gGlow)"/></svg>
<svg class="abs" style="left:970.5px;top:40.5px" width="18" height="23.5" viewBox="0 0 18 23.5"><path d="M0.5 6.2 V20 Q0.5 22.8 8.7 22.8 Q16.9 22.8 16.9 20 V6.2 Z" fill="url(#gBkt)" stroke="#1c48a8" stroke-width="0.7"/><ellipse cx="8.7" cy="6.2" rx="8.2" ry="2" fill="#5a9cec" stroke="#2a5cc4" stroke-width="0.7"/><path d="M1.6 8.6 Q4 9.8 7 9.9 L7 12 Q3.6 11.8 1.6 10.8Z" fill="#a8d0fa" opacity="0.75"/><g fill="#c4646e" stroke="#8c3c48" stroke-width="0.35"><circle cx="8" cy="12.8" r="1.6"/><circle cx="5.4" cy="14.4" r="1.6"/><circle cx="11.2" cy="14.4" r="1.6"/><circle cx="8.3" cy="15.2" r="1.5"/><circle cx="3" cy="16.3" r="1.6"/><circle cx="7.4" cy="17" r="1.6"/><circle cx="10.5" cy="16.6" r="1.6"/><circle cx="14" cy="16.3" r="1.6"/><circle cx="3" cy="18.6" r="1.6"/><circle cx="6.2" cy="19.5" r="1.6"/><circle cx="9.4" cy="19.5" r="1.6"/><circle cx="12.6" cy="18.9" r="1.6"/><circle cx="15" cy="18.4" r="1.3"/></g><g fill="#f0c8cc" opacity="0.85"><circle cx="7.7" cy="12.4" r="0.5"/><circle cx="5.1" cy="14" r="0.5"/><circle cx="10.9" cy="14" r="0.5"/><circle cx="2.7" cy="15.9" r="0.5"/><circle cx="7.1" cy="16.6" r="0.5"/><circle cx="10.2" cy="16.2" r="0.5"/><circle cx="13.7" cy="15.9" r="0.5"/><circle cx="2.7" cy="18.2" r="0.5"/><circle cx="5.9" cy="19.1" r="0.5"/><circle cx="9.1" cy="19.1" r="0.5"/><circle cx="12.3" cy="18.5" r="0.5"/></g><circle cx="8.9" cy="8.9" r="1.8" fill="#e86458" stroke="#b83028" stroke-width="0.3"/><g fill="#e82414" stroke="#a81408" stroke-width="0.4"><circle cx="9.3" cy="2.3" r="2"/><circle cx="6.6" cy="5.6" r="2"/><circle cx="12.4" cy="6.2" r="1.9"/></g><g fill="#fff" opacity="0.85"><circle cx="8.8" cy="1.8" r="0.6"/><circle cx="6.1" cy="5.1" r="0.6"/><circle cx="11.9" cy="5.7" r="0.6"/><circle cx="8.5" cy="8.4" r="0.6"/></g></svg>
<svg class="abs" style="left:1017px;top:39px" width="18" height="18" viewBox="0 0 18 18"><circle cx="3.7" cy="14.7" r="2" fill="#1878c0"/><path d="M12.1 1.2 V9.2 M8.6 3.2 L15.6 7.2 M15.6 3.2 L8.6 7.2" stroke="#1d7fc4" stroke-width="1.6" stroke-linecap="round"/></svg>
<svg class="abs" style="left:1042px;top:39px" width="16" height="16" viewBox="0 0 16 16"><circle cx="9.7" cy="5.7" r="3.9" fill="none" stroke="#1a1a1a" stroke-width="2"/><path d="M6.6 8.8 L1.8 13.4" stroke="#1a1a1a" stroke-width="2.9" stroke-linecap="round"/><path d="M9.8 12 H13.8 L11.8 14 Z" fill="#333"/></svg>
<div class="abs" style="left:1057px;top:40px;width:1px;height:13.5px;background:#62b4fa"></div>
<svg class="abs" style="left:1207px;top:42px" width="14" height="13" viewBox="0 0 14 13"><path d="M0.6 0.8 H13.4 L8.4 6.6 V12 L5.6 12.4 V6.6 Z" fill="url(#gGray)" stroke="#7c8086" stroke-width="1.25" stroke-linejoin="round"/></svg>
<svg class="abs" style="left:1229.5px;top:39.5px" width="17" height="17" viewBox="0 0 17 17"><path d="M4.8 9.6 L1.4 13.2" stroke="#6e94cc" stroke-width="2.8" stroke-linecap="round"/><circle cx="8.6" cy="5.8" r="4.5" fill="url(#gLens)" stroke="#868e9c" stroke-width="1.8"/><path d="M9.5 8 H13.5 V11 H16 L11.5 15.8 L7 11 H9.5 Z" fill="#2a66e0" stroke="#1848b0" stroke-width="0.5"/></svg>
<svg class="abs" style="left:1253.3px;top:39.5px" width="17" height="17" viewBox="0 0 17 17"><path d="M4.8 9.6 L1.4 13.2" stroke="#6e94cc" stroke-width="2.8" stroke-linecap="round"/><circle cx="8.6" cy="5.8" r="4.5" fill="url(#gLens)" stroke="#868e9c" stroke-width="1.8"/><path d="M9.5 15.8 H13.5 V12.4 H16 L11.5 7.6 L7 12.4 H9.5 Z" fill="#2a66e0" stroke="#1848b0" stroke-width="0.5"/></svg>
<svg class="abs" style="left:1191.6px;top:9.6px" width="13" height="17" viewBox="0 0 13 17"><path d="M6.5 0.5 Q12.3 0.7 12.3 6 Q12.3 8.4 10.4 10.2 Q9.3 11.4 9.2 12.8 H3.8 Q3.7 11.4 2.6 10.2 Q0.7 8.4 0.7 6 Q0.7 0.7 6.5 0.5Z" fill="url(#gBulb)" stroke="#dcae00" stroke-width="0.8"/><ellipse cx="6.5" cy="14.4" rx="3" ry="1.7" fill="#2a2a2a"/><ellipse cx="6.5" cy="13.9" rx="2.2" ry="0.7" fill="#e8e8e8"/></svg>
<div class="abs" style="left:1221px;top:11px;width:14px;height:3px;background:#0e7ac4"></div>
<div class="abs" style="left:1221px;top:16px;width:14px;height:3px;background:#0e7ac4"></div>
<div class="abs" style="left:1221px;top:21px;width:14px;height:3px;background:#0e7ac4"></div>
<svg class="abs" style="left:1249px;top:9.6px" width="16.6" height="16.6" viewBox="0 0 17 17"><circle cx="8.5" cy="8.5" r="7.8" fill="url(#gHelp)" stroke="#2c3e96" stroke-width="1"/><path d="M5.8 6.6 Q5.8 3.6 8.6 3.6 Q11.4 3.6 11.4 6.2 Q11.4 7.6 9.8 8.4 Q8.6 9 8.6 10.4" fill="none" stroke="#fff" stroke-width="2.3" stroke-linecap="butt"/><circle cx="8.6" cy="13.2" r="1.35" fill="#fff"/></svg>
<svg class="abs" style="left:1160.5px;top:74px" width="15" height="10" viewBox="0 0 15 10"><path d="M6.6 0 V10 L0.4 5Z" fill="#3aa028"/><path d="M8.4 0 V10 L14.6 5Z" fill="#2a6ad8"/></svg>
<svg class="abs" style="left:1199.5px;top:75px" width="9" height="9" viewBox="0 0 9 9"><path d="M1.4 1.4 L7.6 7.6 M7.6 1.4 L1.4 7.6" stroke="#d83030" stroke-width="2.2" stroke-linecap="round"/></svg>
<div class="abs" style="left:1234px;top:75px;width:12px;height:3px;background:linear-gradient(#cfcfcf,#ababab);border-radius:1px"></div>
<div class="abs" style="left:1234px;top:80px;width:12px;height:3.5px;background:linear-gradient(#cfcfcf,#ababab);border-radius:1px"></div>
<svg class="abs" style="left:9.5px;top:10px" width="17" height="16" viewBox="0 0 17 16"><rect x="0.4" y="0.1" width="11" height="1.8" fill="#1c2a9c"/><rect x="0.4" y="3.2" width="11" height="1.8" fill="#1a4cff"/><rect x="0.4" y="6.3" width="6" height="1.8" fill="#1a4cff"/><rect x="6.4" y="6.3" width="5" height="1.8" fill="#88a8f8"/><rect x="0.4" y="9.4" width="6" height="1.8" fill="#1c2a9c"/><rect x="7.9" y="7.3" width="8" height="8" fill="#fff" stroke="#888c90" stroke-width="0.8"/><rect x="7.6" y="7.1" width="8.6" height="2.7" fill="#6aa820"/><rect x="8.4" y="7.9" width="7" height="0.8" fill="#a8d060"/><g fill="#222"><rect x="9.3" y="10.9" width="2" height="1.1" rx="0.4"/><rect x="12.5" y="10.9" width="2" height="1.1" rx="0.4"/><rect x="9.3" y="13" width="2" height="1.1" rx="0.4"/><rect x="12.5" y="13" width="2" height="1.1" rx="0.4"/></g></svg>
<svg class="abs" style="left:145.1px;top:9.1px;z-index:5" width="17" height="16" viewBox="0 0 17 16"><path d="M0.5 2.2 V9.4 Q0.5 11 4.8 11 Q9.1 11 9.1 9.4 V2.2Z" fill="url(#gGrn)"/><ellipse cx="4.8" cy="2.2" rx="4.3" ry="1.7" fill="#8cc838"/><path d="M7.8 6.4 V13.4 Q7.8 15.2 12.1 15.2 Q16.4 15.2 16.4 13.4 V6.4Z" fill="url(#gCyl)"/><ellipse cx="12.1" cy="6.4" rx="4.3" ry="1.7" fill="#58b0f8"/></svg>
<svg class="abs" style="left:401.5px;top:14px;z-index:5" width="9" height="9" viewBox="0 0 9 9"><path d="M1.6 1.6 L7.4 7.4 M7.4 1.6 L1.6 7.4" stroke="#a8a884" stroke-width="2.3" stroke-linecap="round"/></svg>
<svg class="abs" style="left:8.5px;top:104px" width="12.5" height="13.5" viewBox="0 0 12.5 13.5"><path d="M4.6 3.7 A4.3 4.3 0 1 0 9.5 7.2" fill="none" stroke="#1c1c1c" stroke-width="1.9"/><path d="M4.2 0.7 L11.8 4.5 L5.2 8.5 Z" fill="#1c1c1c"/></svg>
<svg class="abs" style="left:384px;top:103.7px" width="12" height="12" viewBox="0 0 12 12"><rect x="0.2" y="0.2" width="11.6" height="3.4" rx="0.8" fill="#4cc428"/><rect x="3" y="0.6" width="3" height="2.4" fill="#a0e880" opacity="0.5"/><rect x="0.2" y="4.2" width="11.6" height="3.4" rx="0.8" fill="#4cc428"/><rect x="3" y="4.6" width="3" height="2.4" fill="#a0e880" opacity="0.5"/><rect x="0.2" y="8.2" width="11.6" height="3.4" rx="0.8" fill="#4cc428"/><rect x="3" y="8.6" width="3" height="2.4" fill="#a0e880" opacity="0.5"/></svg>
<svg class="abs" style="left:798.2px;top:103.8px" width="12" height="12" viewBox="0 0 12 12"><rect x="0.2" y="0.2" width="11.6" height="3.4" rx="0.8" fill="#2a8ae0"/><rect x="3" y="0.6" width="3" height="2.4" fill="#90c8f8" opacity="0.5"/><rect x="0.2" y="4.2" width="11.6" height="3.4" rx="0.8" fill="#2a8ae0"/><rect x="3" y="4.6" width="3" height="2.4" fill="#90c8f8" opacity="0.5"/><rect x="0.2" y="8.2" width="11.6" height="3.4" rx="0.8" fill="#2a8ae0"/><rect x="3" y="8.6" width="3" height="2.4" fill="#90c8f8" opacity="0.5"/></svg>
<svg class="abs" style="left:1254.7px;top:411.2px;z-index:8" width="16" height="16" viewBox="0 0 16 16"><polygon points="15.47,7.33 15.47,8.67 14.40,9.11 14.10,10.24 14.81,11.15 14.13,12.32 12.99,12.16 12.16,12.99 12.32,14.13 11.15,14.81 10.24,14.10 9.11,14.40 8.67,15.47 7.33,15.47 6.89,14.40 5.76,14.10 4.85,14.81 3.68,14.13 3.84,12.99 3.01,12.16 1.87,12.32 1.19,11.15 1.90,10.24 1.60,9.11 0.53,8.67 0.53,7.33 1.60,6.89 1.90,5.76 1.19,4.85 1.87,3.68 3.01,3.84 3.84,3.01 3.68,1.87 4.85,1.19 5.76,1.90 6.89,1.60 7.33,0.53 8.67,0.53 9.11,1.60 10.24,1.90 11.15,1.19 12.32,1.87 12.16,3.01 12.99,3.84 14.13,3.68 14.81,4.85 14.10,5.76 14.40,6.89" fill="#2e7a34"/><circle cx="8" cy="8" r="3.6" fill="#f4faff"/></svg>
<svg class="abs" style="left:1255.8px;top:438px;z-index:8" width="16" height="16" viewBox="0 0 16 16"><circle cx="8" cy="8" r="7.1" fill="none" stroke="#5c5c5c" stroke-width="0.9"/><path d="M5.2 5.2 L10.8 10.8 M10.8 5.2 L5.2 10.8" stroke="#2a2a2a" stroke-width="2.1" stroke-linecap="round"/></svg>
<svg class="abs" style="left:1255.8px;top:470.7px;z-index:8" width="16" height="16" viewBox="0 0 16 16"><circle cx="8" cy="8" r="7.1" fill="none" stroke="#5c5c5c" stroke-width="0.9"/><path d="M5.2 5.2 L10.8 10.8 M10.8 5.2 L5.2 10.8" stroke="#2a2a2a" stroke-width="2.1" stroke-linecap="round"/></svg>
<svg class="abs" style="left:616.5px;top:703px;z-index:12" width="10" height="9" viewBox="0 0 10 9"><path d="M5 0 L10 5 H7 V9 H3 V5 H0Z" fill="#2030dc"/></svg>
<svg class="abs" style="left:631.8px;top:703px;z-index:12" width="10" height="9" viewBox="0 0 10 9"><path d="M5 9 L10 4 H7 V0 H3 V4 H0Z" fill="#2030dc"/></svg>
<div class="abs" style="left:620.0px;top:401px;width:2px;height:2px;background:#1a7ac0;z-index:7"></div>
<div class="abs" style="left:623.5px;top:401px;width:2px;height:2px;background:#1a7ac0;z-index:7"></div>
<div class="abs" style="left:627.0px;top:401px;width:2px;height:2px;background:#1a7ac0;z-index:7"></div>
<div class="abs" style="left:630.5px;top:401px;width:2px;height:2px;background:#1a7ac0;z-index:7"></div>
<div class="abs" style="left:634.0px;top:401px;width:2px;height:2px;background:#1a7ac0;z-index:7"></div>
<div class="abs" style="left:637.5px;top:401px;width:2px;height:2px;background:#1a7ac0;z-index:7"></div>
<div class="abs" style="left:641.0px;top:401px;width:2px;height:2px;background:#1a7ac0;z-index:7"></div>
<div class="abs" style="left:644.5px;top:401px;width:2px;height:2px;background:#1a7ac0;z-index:7"></div>
<div class="abs" style="left:648.0px;top:401px;width:2px;height:2px;background:#1a7ac0;z-index:7"></div>
<div class="abs" style="left:651.5px;top:401px;width:2px;height:2px;background:#1a7ac0;z-index:7"></div>
</div></body></html>
